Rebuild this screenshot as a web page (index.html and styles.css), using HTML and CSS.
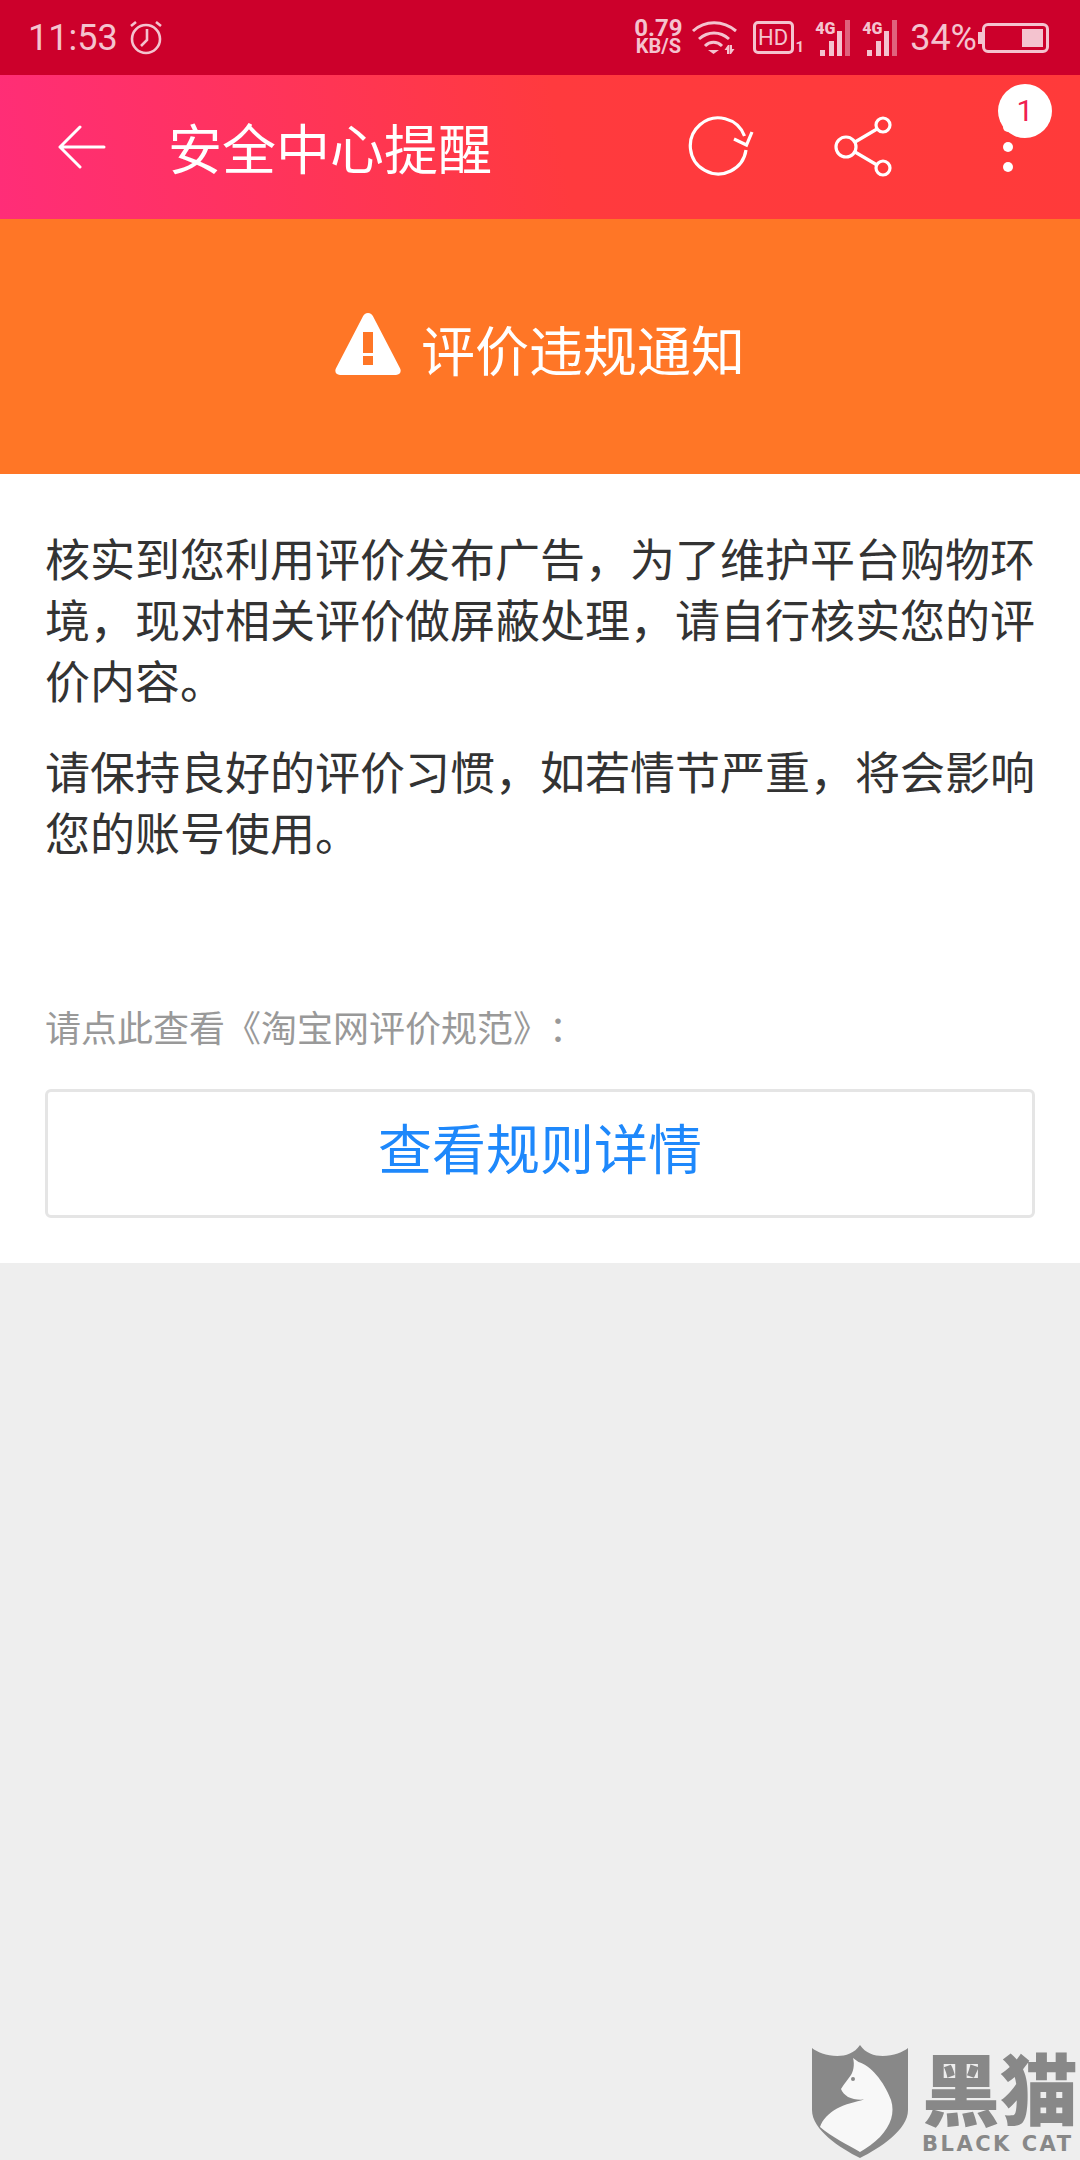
FILE: index.html
```html
<!DOCTYPE html>
<html lang="zh-CN">
<head>
    <meta charset="UTF-8">
    <meta name="viewport" content="width=device-width, initial-scale=1.0">
    <title>安全中心提醒</title>
    <link rel="stylesheet" href="styles.css">
</head>
<body>
    <div class="page">
        <div class="status-bar">
            <span class="time">11:53</span>
            <svg class="alarm" width="34" height="36" viewBox="0 0 34 36" fill="none" stroke="#f4c3cf" stroke-width="2.6">
                <circle cx="17" cy="20" r="14"/>
                <path d="M18 10v11l-6 6M2 7l5-4M32 7l-5-4"/>
            </svg>
            <div class="status-right">
                <div class="speed"><b>0.79</b><b class="speed-unit">KB/S</b></div>
                <svg class="wifi" width="47" height="34" viewBox="0 0 47 34" fill="none" stroke="#f4c3cf" stroke-width="3">
                    <path d="M2 11C14 0 32 0 45 11M8 19C17 11 29 11 38 19M14 26C19 21 26 21 31 26"/>
                    <path d="M17 30h11l-5.500 4z" fill="#f4c3cf" stroke="none"/>
                    <path d="M37 25l-3.500 5H36v4h2.500V25zM40 34l3.500-5H41v-4h-2V34z" fill="#f4c3cf" stroke="none"/>
                </svg>
                <div class="hd"><span class="hd-box">HD</span><b class="hd-sub">1</b></div>
                <div class="signal">
                    <b class="signal-type">4G</b>
                    <svg width="30" height="36" viewBox="0 0 30 36" fill="#f4c3cf">
                        <rect x="0" y="30" width="5" height="6"/>
                        <rect x="9" y="21" width="5" height="15"/>
                        <rect x="17" y="11" width="5" height="25"/>
                        <rect x="25" y="0" width="5" height="36" opacity="0.5"/>
                    </svg>
                </div>
                <div class="signal">
                    <b class="signal-type">4G</b>
                    <svg width="30" height="36" viewBox="0 0 30 36" fill="#f4c3cf">
                        <rect x="0" y="30" width="5" height="6"/>
                        <rect x="9" y="21" width="5" height="15"/>
                        <rect x="17" y="11" width="5" height="25"/>
                        <rect x="25" y="0" width="5" height="36" opacity="0.5"/>
                    </svg>
                </div>
                <span class="percent">34%</span>
                <div class="battery"><div class="battery-fill"></div></div>
            </div>
        </div>

        <div class="toolbar">
            <svg class="back" width="48" height="44" viewBox="0 0 48 44" fill="none" stroke="#fff" stroke-width="3" stroke-linecap="round" stroke-linejoin="round">
                <path d="M46 22H2M22 2L2 22l20 20"/>
            </svg>
            <h1 class="toolbar-title">安全中心提醒</h1>
            <div class="toolbar-actions">
                <svg width="66" height="62" viewBox="0 0 66 62" fill="none" stroke="#fff" stroke-width="3.2">
                    <path d="M58 34A28 28 0 1 1 56.500 20"/>
                    <path d="M64 16l-5.500 13L46 23"/>
                </svg>
                <svg class="share" width="60" height="62" viewBox="0 0 60 62" fill="none" stroke="#fff" stroke-width="3.2">
                    <circle cx="12" cy="31" r="10"/>
                    <circle cx="49" cy="9" r="7"/>
                    <circle cx="49" cy="52" r="7"/>
                    <path d="M21 26l22-13M21 36l22 13"/>
                </svg>
                <div class="more">
                    <i class="dot"></i><i class="dot"></i><i class="dot"></i>
                    <span class="badge">1</span>
                </div>
            </div>
        </div>

        <div class="notice-head">
            <svg width="66" height="62" viewBox="0 0 66 62">
                <path d="M33 0c2.500 0 4 1.300 5 3.300l27 52c1.800 3.500-.2 6.700-4 6.700H5c-3.800 0-5.800-3.200-4-6.700l27-52C29 1.300 30.500 0 33 0z" fill="#fff"/>
                <path d="M28 19h10v21H28zM28 43h10v9H28z" fill="#ff7626"/>
            </svg>
            <h2 class="notice-title">评价违规通知</h2>
        </div>

        <div class="content">
            <p class="para">核实到您利用评价发布广告，为了维护平台购物环境，现对相关评价做屏蔽处理，请自行核实您的评价内容。</p>
            <p class="para">请保持良好的评价习惯，如若情节严重，将会影响您的账号使用。</p>
            <p class="hint">请点此查看《淘宝网评价规范》：</p>
            <a class="rule-btn">查看规则详情</a>
        </div>

        <div class="watermark">
            <svg width="96" height="113" viewBox="0 0 96 113">
                <path d="M0 3c8 7 36 15 48-3 12 18 40 10 48 3v62c0 20-28 38-48 48C28 103 0 85 0 65z" fill="#888"/>
                <path d="M41 13l5.500 4C58 20 72 36 79 55c4 13 0 25-11 37-6 6-13 11-20 15C36 100 20 92 8 82c2-7 9-14 17-18.500C33 59 44 57 52 54.500 46 55 40 54 36 52c-3-2-6-5-7-8 3-5 7-10 10-14 2-3 4-10 2-17z" fill="#f8f8f8"/>
                <circle cx="41" cy="34" r="2" fill="#888"/>
            </svg>
            <div class="watermark-text">
                <span class="watermark-cn">黑猫</span>
                <span class="watermark-en">BLACK CAT</span>
            </div>
        </div>
    </div>
</body>
</html>
```

FILE: styles.css
```css
* {
    margin: 0;
    padding: 0;
    box-sizing: border-box;
}

body {
    font-family: "Noto Sans CJK SC", "Noto Sans", sans-serif;
    background: #eeeeee;
    text-spacing-trim: space-all;
}

.page {
    position: relative;
    width: 1080px;
    height: 2160px;
    overflow: hidden;
    background: #eeeeee;
}

/* status bar */
.status-bar {
    display: flex;
    align-items: center;
    height: 75px;
    padding: 0 31px 0 28px;
    background: #cc002b;
    color: #f4c3cf;
    font-family: Roboto, sans-serif;
}

.time {
    font-size: 36px;
    margin-right: 11px;
}

.alarm {
    margin-top: -2px;
}

.status-right {
    display: flex;
    align-items: center;
    margin-left: auto;
}

.speed {
    display: flex;
    flex-direction: column;
    align-items: center;
    line-height: 20px;
    font-size: 24px;
    margin-top: -2px;
}

.speed-unit {
    font-size: 20px;
    line-height: 17px;
}

.wifi {
    margin-left: 8px;
    margin-top: -2px;
}

.hd {
    display: flex;
    align-items: flex-end;
    margin-left: 15px;
    margin-top: -1px;
}

.hd-box {
    display: flex;
    align-items: center;
    justify-content: center;
    width: 41px;
    height: 33px;
    border: 3px solid #f4c3cf;
    border-radius: 5px;
    font-size: 22px;
}

.hd-sub {
    font-size: 15px;
    line-height: 14px;
    margin-left: 2px;
}

.signal {
    display: flex;
    align-items: flex-start;
    width: 35px;
    margin-left: 11px;
}

.signal + .signal {
    margin-left: 12px;
}

.signal svg {
    flex: none;
    margin-left: -16px;
}

.signal-type {
    flex: none;
    width: 21px;
    font-size: 16px;
    font-weight: 900;
    line-height: 17px;
}

.percent {
    font-size: 36px;
    margin-left: 13px;
}

.battery {
    position: relative;
    display: flex;
    justify-content: flex-end;
    width: 67px;
    height: 30px;
    margin-left: 5px;
    padding: 3px;
    border: 3px solid #f4c3cf;
    border-radius: 6px;
}

.battery::before {
    content: "";
    position: absolute;
    left: -7px;
    top: 6px;
    width: 4px;
    height: 12px;
    background: #f4c3cf;
}

.battery-fill {
    width: 21px;
    background: #f4c3cf;
}

/* toolbar */
.toolbar {
    display: flex;
    align-items: center;
    height: 144px;
    padding-left: 58px;
    background: linear-gradient(80deg, #ff2d78 0%, #ff3a3e 52%, #ff3a3a 100%);
    color: #ffffff;
}

.toolbar-title {
    margin-left: 62px;
    font-size: 54px;
    font-weight: 400;
    line-height: 1;
}

.toolbar-actions {
    display: flex;
    align-items: center;
    gap: 78px;
    margin-left: auto;
    padding-right: 67px;
}

.share {
    margin-left: 2px;
}

.more {
    position: relative;
    display: flex;
    flex-direction: column;
    gap: 10px;
    margin-left: 31px;
}

.dot {
    width: 10px;
    height: 10px;
    border-radius: 50%;
    background: #ffffff;
}

.badge {
    position: absolute;
    left: -5px;
    top: -38px;
    width: 54px;
    height: 54px;
    border-radius: 50%;
    background: #ffffff;
    color: #f0204f;
    font-family: Roboto, sans-serif;
    font-size: 30px;
    line-height: 54px;
    text-align: center;
}

/* orange notice header */
.notice-head {
    display: flex;
    justify-content: center;
    align-items: flex-start;
    height: 255px;
    padding-top: 94px;
    background: #ff7626;
    color: #ffffff;
}

.notice-title {
    margin-left: 20px;
    font-size: 54px;
    font-weight: 400;
    line-height: 70px;
    margin-top: 1px;
}

/* body text */
.content {
    height: 789px;
    padding: 53px 45px 0;
    background: #ffffff;
    color: #333333;
}

.para {
    font-size: 45px;
    line-height: 61px;
    margin-bottom: 30px;
}

.hint {
    margin-top: 139px;
    font-size: 36px;
    line-height: 50px;
    color: #999999;
}

.rule-btn {
    display: block;
    height: 129px;
    margin-top: 38px;
    border: 3px solid #e5e5e5;
    border-radius: 6px;
    color: #1e88fb;
    font-size: 54px;
    line-height: 110px;
    text-align: center;
}

/* watermark sits over the grey page */
.watermark {
    position: absolute;
    left: 812px;
    top: 2045px;
    display: flex;
    gap: 14px;
}

.watermark-text {
    display: flex;
    flex-direction: column;
    color: #888888;
}

.watermark-cn {
    font-size: 78px;
    font-weight: 900;
    line-height: 76px;
    margin-top: 3px;
    white-space: nowrap;
}

.watermark-en {
    font-family: "DejaVu Sans", sans-serif;
    font-weight: 700;
    font-size: 21px;
    line-height: 26px;
    letter-spacing: 2.500px;
    margin-top: 7px;
    white-space: nowrap;
}
```
